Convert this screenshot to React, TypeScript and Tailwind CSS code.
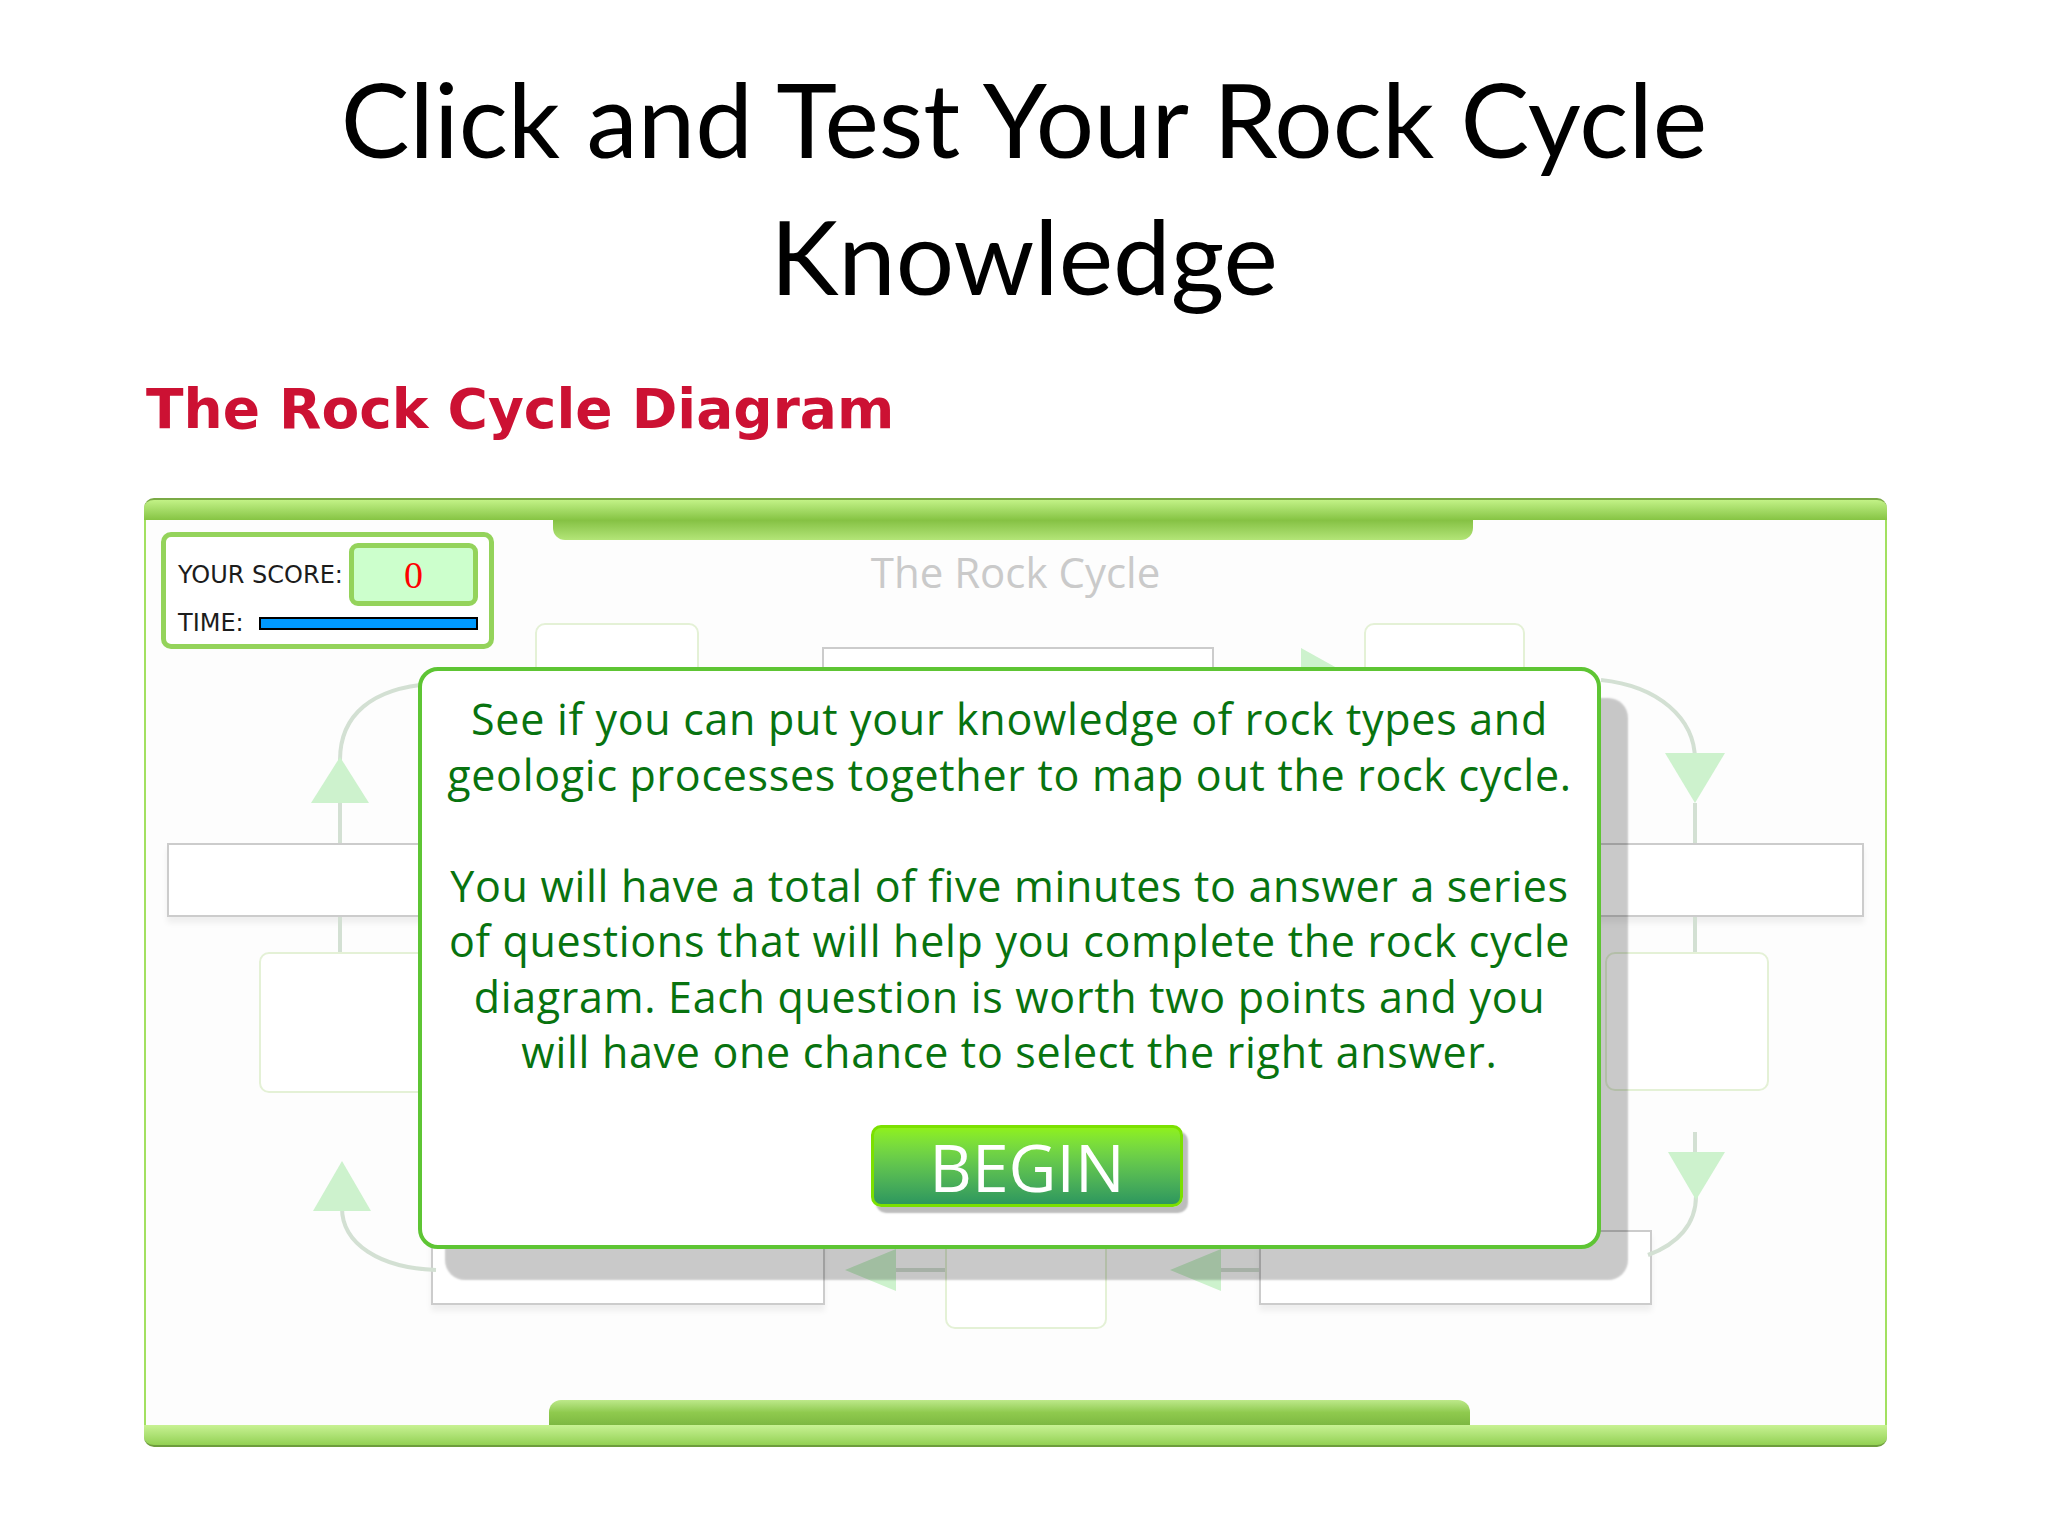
import React from 'react';

const introLines = [
  'See if you can put your knowledge of rock types and',
  'geologic processes together to map out the rock cycle.',
  '',
  'You will have a total of five minutes to answer a series',
  'of questions that will help you complete the rock cycle',
  'diagram. Each question is worth two points and you',
  'will have one chance to select the right answer.',
];

function ScorePanel() {
  return (
    <div className="ml-[15px] mt-[12px] w-[333px] h-[117px] rounded-[10px] border-[5px] border-[#94d35b] bg-white pt-[6px] pl-[12px] pr-[11px] font-['DejaVu_Sans',sans-serif] text-[#1c1c1c]">
      <div className="flex items-center justify-between">
        <span className="text-[24px] leading-none">YOUR SCORE:</span>
        <div className="flex items-center justify-center w-[129px] h-[63px] rounded-[9px] border-[5px] border-[#94d35b] bg-[#ccffcc] font-['Liberation_Serif',serif] text-[38px] leading-none text-[#ff0000]">
          0
        </div>
      </div>
      <div className="mt-[7px] flex items-center h-[20px]">
        <span className="w-[82px] text-[24px] leading-none">TIME:</span>
        <div className="h-[13px] w-[221px] border-2 border-black bg-[#0099ff]" />
      </div>
    </div>
  );
}

// faint rock cycle diagram sitting behind the intro dialog
function Diagram() {
  return (
    <>
      {/* gray answer slots */}
      <div className="absolute left-[676px] top-[127px] w-[392px] h-[80px] border-2 border-[#cccccc] bg-white" />
      <div className="absolute left-[21px] top-[323px] w-[290px] h-[74px] border-2 border-[#cccccc] bg-white shadow-[0_6px_6px_rgba(0,0,0,0.06)]" />
      <div className="absolute left-[1430px] top-[323px] w-[288px] h-[74px] border-2 border-[#cccccc] bg-white shadow-[0_6px_6px_rgba(0,0,0,0.06)]" />
      <div className="absolute left-[285px] top-[700px] w-[394px] h-[85px] border-2 border-[#cccccc] bg-white shadow-[0_6px_6px_rgba(0,0,0,0.06)]" />
      <div className="absolute left-[1113px] top-[710px] w-[393px] h-[75px] border-2 border-[#cccccc] bg-white shadow-[0_6px_6px_rgba(0,0,0,0.06)]" />

      {/* green rounded slots */}
      <div className="absolute left-[389px] top-[103px] w-[164px] h-[100px] rounded-[10px] border-2 border-[#e4f1d6] bg-white" />
      <div className="absolute left-[1218px] top-[103px] w-[161px] h-[100px] rounded-[10px] border-2 border-[#e4f1d6] bg-white" />
      <div className="absolute left-[113px] top-[432px] w-[190px] h-[141px] rounded-[10px] border-2 border-[#e4f1d6] bg-white" />
      <div className="absolute left-[1459px] top-[432px] w-[164px] h-[139px] rounded-[10px] border-2 border-[#e4f1d6] bg-white" />
      <div className="absolute left-[799px] top-[700px] w-[162px] h-[109px] rounded-[10px] border-2 border-[#e4f1d6] bg-white" />

      <svg className="absolute left-0 top-0" width="1739" height="905" viewBox="0 0 1739 905">
        <g stroke="#d3e0d3" strokeWidth="4" fill="none">
          <path d="M194 283 V323" />
          <path d="M194 397 V432" />
          <path d="M1549 283 V323" />
          <path d="M1549 397 V432" />
          <path d="M1549 612 V632" />
          <path d="M750 750 H799" />
          <path d="M1075 750 H1113" />
          <path d="M1130 153 H1160" />
          <path d="M194 240 C194 195 226 168 285 164" />
          <path d="M1455 160 C1512 166 1549 198 1549 240" />
          <path d="M196 688 C196 724 234 748 290 750" />
          <path d="M1550 676 C1550 704 1532 724 1502 735" />
        </g>
        <g fill="#cdf2cd">
          <polygon points="194,237 165,283 223,283" />
          <polygon points="1549,283 1519,233 1579,233" />
          <polygon points="196,641 167,691 225,691" />
          <polygon points="1550,680 1522,632 1579,632" />
          <polygon points="699,750 750,729 750,771" />
          <polygon points="1024,750 1075,729 1075,771" />
          <polygon points="1200,153 1155,128 1155,178" />
        </g>
      </svg>
    </>
  );
}

function IntroDialog() {
  return (
    <div className="absolute left-[272px] top-[147px] w-[1183px] h-[582px] rounded-[20px] border-4 border-[#5ec534] bg-white pt-[20px] shadow-[27px_31px_2px_rgba(0,0,0,0.21)]">
      <div className="text-center font-['Open_Sans',sans-serif] text-[43px] leading-[55.5px] tracking-[0.7px] font-medium text-[#08730f]">
        {introLines.map((line, i) => (
          <div key={i} className="whitespace-nowrap">
            {line || '\u00a0'}
          </div>
        ))}
      </div>
      <button className="mt-[45px] ml-[449px] flex items-center justify-center w-[312px] h-[82px] rounded-[10px] border-[3px] border-[#7be000] bg-linear-to-b from-[#8ef01a] to-[#2d975e] shadow-[5px_6px_2px_#bcbcbc] font-['Open_Sans',sans-serif] text-[66px] leading-none text-white">
        BEGIN
      </button>
    </div>
  );
}

function GameFrame() {
  return (
    <div className="relative mt-[57px] ml-[144px] w-[1743px] h-[949px] flex flex-col">
      <div className="h-[22px] rounded-t-[10px] border-t-2 border-[#7aaa45] bg-linear-to-b from-[#c2f286] to-[#86c443]" />
      <div className="relative flex-1 border-x-2 border-[#a2e060] bg-[#fdfdfd]">
        <ScorePanel />
        <div className="absolute inset-x-0 top-[31px] text-center font-['Open_Sans',sans-serif] text-[42px] leading-none text-[#cacaca]">
          The Rock Cycle
        </div>
        <Diagram />
        <IntroDialog />
      </div>
      <div className="h-[22px] rounded-b-[10px] border-b-2 border-[#6d9d3c] bg-linear-to-b from-[#c8f293] to-[#93d153]" />
      {/* hanging tabs on the top and bottom rails */}
      <div className="absolute left-[409px] top-[22px] w-[920px] h-[20px] rounded-b-[12px] bg-linear-to-b from-[#85c143] to-[#b3e577]" />
      <div className="absolute left-[405px] top-[902px] w-[921px] h-[25px] rounded-t-[12px] bg-linear-to-b from-[#bde98a] via-[#8fca4e] to-[#7db841]" />
    </div>
  );
}

export default function App() {
  return (
    <div className="w-[2048px] h-[1536px] overflow-hidden bg-white">
      <h1 className="pt-[50px] text-center font-['Lato',sans-serif] text-[103px] leading-[137px] font-normal text-black">
        Click and Test Your Rock Cycle
        <br />
        Knowledge
      </h1>
      <h2 className="mt-[53px] ml-[146px] font-['DejaVu_Sans',sans-serif] text-[55px] leading-[64px] font-bold text-[#cc1133]">
        The Rock Cycle Diagram
      </h2>
      <GameFrame />
    </div>
  );
}
